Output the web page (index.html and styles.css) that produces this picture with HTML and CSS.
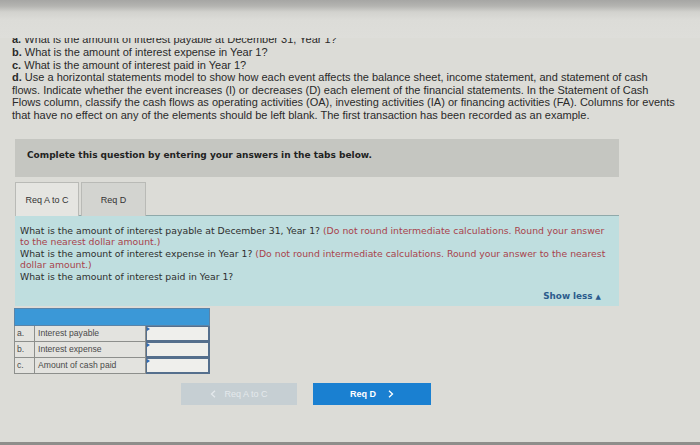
FILE: index.html
```html
<!DOCTYPE html>
<html lang="en">
<head>
<meta charset="utf-8">
<title>Req A to C</title>
<link rel="stylesheet" href="styles.css">
</head>
<body>
<div class="header"></div>
<div class="viewport">
  <div class="intro">
    <div class="q"><b>a.</b> What is the amount of interest payable at December 31, Year 1?</div>
    <div class="q"><b>b.</b> What is the amount of interest expense in Year 1?</div>
    <div class="q"><b>c.</b> What is the amount of interest paid in Year 1?</div>
    <div class="q"><b>d.</b> Use a horizontal statements model to show how each event affects the balance sheet, income statement, and statement of cash<br>flows. Indicate whether the event increases (I) or decreases (D) each element of the financial statements. In the Statement of Cash<br>Flows column, classify the cash flows as operating activities (OA), investing activities (IA) or financing activities (FA). Columns for events<br>that have no effect on any of the elements should be left blank. The first transaction has been recorded as an example.</div>
  </div>

  <div class="card">
    <div class="banner">Complete this question by entering your answers in the tabs below.</div>
    <div class="tabs">
      <div class="tab active">Req A to C</div>
      <div class="tab">Req D</div>
    </div>
    <div class="panel">
      <div class="panel-text">
        What is the amount of interest payable at December 31, Year 1? <span class="note">(Do not round intermediate calculations. Round your answer to the nearest dollar amount.)</span><br>
        What is the amount of interest expense in Year 1? <span class="note">(Do not round intermediate calculations. Round your answer to the nearest dollar amount.)</span><br>
        What is the amount of interest paid in Year 1?
      </div>
      <div class="show-less">Show less <span class="tri">&#9650;</span></div>
    </div>
  </div>

  <table class="answers">
    <tr><th colspan="3"></th></tr>
    <tr><td class="letter">a.</td><td class="label">Interest payable</td><td class="input"><div class="box"></div></td></tr>
    <tr><td class="letter">b.</td><td class="label">Interest expense</td><td class="input"><div class="box"></div></td></tr>
    <tr><td class="letter">c.</td><td class="label">Amount of cash paid</td><td class="input"><div class="box"></div></td></tr>
  </table>

  <div class="nav">
    <div class="btn prev"><svg class="chev" width="6" height="8" viewBox="0 0 6 8"><path d="M5 0.8 L1.5 4 L5 7.2" fill="none" stroke="currentColor" stroke-width="1.3"/></svg><span>Req A to C</span></div>
    <div class="btn next"><span>Req D</span><svg class="chev" width="6" height="8" viewBox="0 0 6 8"><path d="M1 0.8 L4.5 4 L1 7.2" fill="none" stroke="currentColor" stroke-width="1.3"/></svg></div>
  </div>
</div>
<div class="bottom"></div>
</body>
</html>
```

FILE: styles.css
```css
html, body {
  margin: 0;
  padding: 0;
}
body {
  width: 700px;
  height: 445px;
  overflow: hidden;
  background: #dcdcd7;
  color: #2b2b2b;
  font-family: "Liberation Sans", Arial, sans-serif;
}
.header {
  height: 38px;
  background: linear-gradient(to bottom, #a6a6a4 0px, #b4b4b1 6px, #d2d2ce 12px, #dcdcd8 20px, #dededa 38px);
}
.viewport {
  height: 404px;
  overflow: hidden;
}
.intro {
  margin-top: -4.6px;
  padding-left: 12px;
  width: 684px;
  font-size: 11px;
  line-height: 12.6px;
  color: #2a2a2a;
}
.intro b {
  font-weight: bold;
}
.card {
  margin: 17.4px 0 0 15px;
  width: 604px;
}
.banner {
  box-sizing: border-box;
  height: 38px;
  padding: 11px 12px 0;
  background: #c5c6c1;
  font-family: "DejaVu Sans", Verdana, sans-serif;
  font-weight: bold;
  font-size: 9px;
  line-height: 10px;
  color: #222;
}
.tabs {
  display: flex;
  gap: 2px;
  margin-top: 5px;
  height: 33px;
}
.tab {
  box-sizing: border-box;
  width: 65px;
  height: 34px;
  display: flex;
  align-items: center;
  justify-content: center;
  padding-top: 2px;
  background: #d3d4d0;
  border: 1px solid #b9bab6;
  border-bottom: none;
  font-size: 9px;
  color: #333;
}
.tab.active {
  width: 64px;
  background: #e5e5e1;
  position: relative;
  z-index: 1;
}
.panel {
  box-sizing: border-box;
  height: 91px;
  background: #bfdedf;
  border-top: 1px solid #8fa9aa;
  padding: 9px 18px 0 5px;
  display: flex;
  flex-direction: column;
  font-family: "DejaVu Sans", Verdana, sans-serif;
  font-size: 9.3px;
  line-height: 11.4px;
  color: #2e2e2e;
}
.panel-text {
  width: 594px;
}
.note {
  color: #a8434c;
}
.show-less {
  margin-top: 9px;
  align-self: flex-end;
  font-weight: bold;
  color: #2b5b8c;
  font-size: 8.8px;
}
.tri {
  font-size: 7px;
}
.answers {
  margin: 2px 0 0 14px;
  border-collapse: collapse;
  font-size: 8.6px;
  color: #4a4a4a;
}
.answers th {
  height: 16px;
  padding: 0;
  background: #3b98d7;
  border: 1px solid #5b84a8;
}
.answers td {
  height: 15px;
  padding: 0;
  border: 1px solid #8d8f8c;
  background: #e3e3df;
}
.answers td.letter {
  width: 20px;
  padding-left: 2px;
  box-sizing: border-box;
}
.answers td.label {
  width: 111px;
  padding-left: 3px;
  box-sizing: border-box;
}
.answers td.input {
  width: 63px;
  background: #efefec;
  border: 1px solid #556f8d;
  position: relative;
}
.box {
  height: 13px;
  border: 1px solid #556f8d;
}
.answers td.input::before {
  content: "";
  position: absolute;
  left: 1px;
  top: 1px;
  border-style: solid;
  border-width: 2.5px 0 2.5px 3.5px;
  border-color: transparent transparent transparent #2d6bb8;
}
.nav {
  display: flex;
  gap: 16px;
  margin: 9px 0 0 181px;
}
.btn {
  box-sizing: border-box;
  height: 22px;
  display: flex;
  align-items: center;
  justify-content: center;
  gap: 12px;
  font-size: 9px;
  font-weight: bold;
}
.btn.prev {
  width: 116px;
  background: #c6cfd3;
  color: #e4e9ec;
  font-weight: normal;
  gap: 8px;
}
.btn.next {
  width: 118px;
  background: #1a80d1;
  color: #ffffff;
}
.chev {
  display: block;
}
.bottom {
  height: 3px;
  background: #8e8e8b;
}
```
